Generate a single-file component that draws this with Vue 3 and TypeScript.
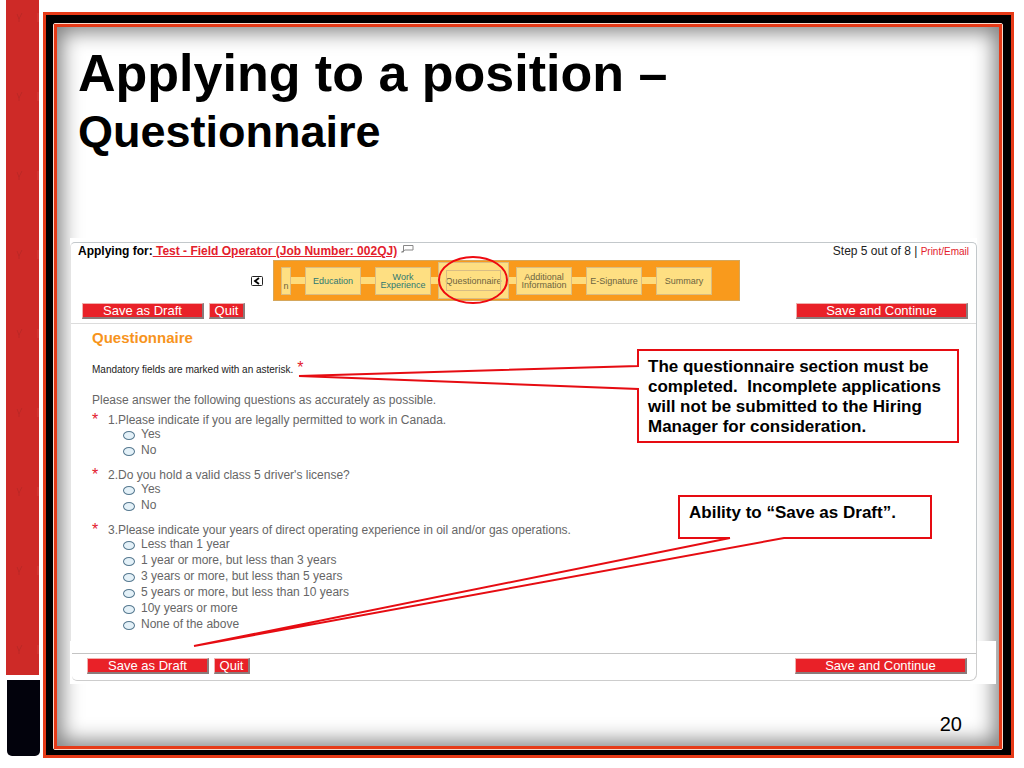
<script setup lang="ts">
import { ref } from 'vue'

interface Step {
  label: string
  kind: 'partial' | 'done' | 'active' | 'todo'
}

interface Question {
  id: string
  text: string
  options: string[]
}

const steps: Step[] = [
  { label: 'n', kind: 'partial' },
  { label: 'Education', kind: 'done' },
  { label: 'Work Experience', kind: 'done' },
  { label: 'Questionnaire', kind: 'active' },
  { label: 'Additional Information', kind: 'todo' },
  { label: 'E-Signature', kind: 'todo' },
  { label: 'Summary', kind: 'todo' },
]

const questions: Question[] = [
  { id: 'q1', text: '1.Please indicate if you are legally permitted to work in Canada.', options: ['Yes', 'No'] },
  { id: 'q2', text: "2.Do you hold a valid class 5 driver's license?", options: ['Yes', 'No'] },
  {
    id: 'q3',
    text: '3.Please indicate your years of direct operating experience in oil and/or gas operations.',
    options: [
      'Less than 1 year',
      '1 year or more, but less than 3 years',
      '3 years or more, but less than 5 years',
      '5 years or more, but less than 10 years',
      '10y years or more',
      'None of the above',
    ],
  },
]

const answers = ref<Record<string, string>>({})
</script>

<template>
  <div class="slide">
    <div class="rail" aria-hidden="true">
      <div class="rail-red">
        <svg width="33" height="100%">
          <defs>
            <pattern id="marks" width="33" height="79" patternUnits="userSpaceOnUse">
              <path d="M11 14l2 5 3-6M13 19v3" fill="none" stroke="#a92322" stroke-width="1" opacity="0.5" />
              <path d="M32 13v9" fill="none" stroke="#e0605a" stroke-width="1" opacity="0.4" />
            </pattern>
          </defs>
          <rect width="33" height="100%" fill="url(#marks)" />
        </svg>
      </div>
      <div class="rail-black"></div>
    </div>

    <div class="frame">
      <div class="frame-line">
        <main class="paper">
          <h1 class="title">Applying to a position –<span class="subtitle">Questionnaire</span></h1>

          <div class="panel">
            <section class="sheet">
              <header class="head">
                <div class="job">
                  <b>Applying for:</b><a class="job-link" href="#">&nbsp;Test - Field Operator (Job Number: 002QJ)</a>
                  <svg class="bubble" width="13" height="8" viewBox="0 0 13 8">
                    <path d="M2.500 0.500h9.500v4.500h-8l-3.500 2h2v-2z" fill="#fff" stroke="#888" />
                  </svg>
                </div>
                <div class="progress">Step 5 out of 8 | <a class="print" href="#">Print/Email</a></div>
              </header>

              <nav class="steps">
                <button class="back" type="button" aria-label="Previous steps">
                  <svg width="12" height="10" viewBox="0 0 12 10">
                    <rect x="0.500" y="0.500" width="11" height="9" rx="1" fill="#fff" stroke="#222" />
                    <path d="M8 2L4 5l4 3" fill="none" stroke="#000" stroke-width="1.800" />
                  </svg>
                </button>
                <ol class="strip">
                  <li v-for="step in steps" :key="step.label" :class="['step', step.kind]">
                    <a class="step-box" href="#">{{ step.label }}</a>
                  </li>
                </ol>
              </nav>

              <div class="actions">
                <button class="btn wide" type="button">Save as Draft</button>
                <button class="btn quit" type="button">Quit</button>
                <button class="btn next" type="button">Save and Continue</button>
              </div>

              <form class="form">
                <h2 class="heading">Questionnaire</h2>
                <p class="mandatory">Mandatory fields are marked with an asterisk.<span class="star">*</span></p>
                <p class="intro">Please answer the following questions as accurately as possible.</p>
                <div
                  v-for="question in questions"
                  :key="question.id"
                  class="question"
                  role="radiogroup"
                  :aria-labelledby="question.id"
                >
                  <div class="prompt">
                    <span class="star">*</span><span :id="question.id">{{ question.text }}</span>
                  </div>
                  <label v-for="option in question.options" :key="option" class="option">
                    <input v-model="answers[question.id]" type="radio" :name="question.id" :value="option" />
                    <span>{{ option }}</span>
                  </label>
                </div>
              </form>
            </section>

            <footer class="foot">
              <div class="foot-box">
                <div class="actions">
                  <button class="btn wide" type="button">Save as Draft</button>
                  <button class="btn quit" type="button">Quit</button>
                  <button class="btn next" type="button">Save and Continue</button>
                </div>
              </div>
            </footer>

            <svg class="shapes" width="906" height="446" viewBox="0 0 906 446" aria-hidden="true">
              <ellipse cx="403" cy="42" rx="34" ry="23" fill="none" stroke="#ee0a10" stroke-width="2" />
              <path
                d="M568 112H888V204H568V151L229 138L568 128Z"
                fill="#fff"
                stroke="#e60c12"
                stroke-width="2"
              />
              <path
                d="M660 300H609V258H861V300H714L124 408L660 300"
                fill="#fff"
                stroke="#e60c12"
                stroke-width="2"
              />
            </svg>
            <p class="note note-top">
              The questionnaire section must be completed.&nbsp; Incomplete applications will not be submitted to the Hiring Manager for consideration.
            </p>
            <p class="note note-draft">Ability to “Save as Draft”.</p>
          </div>

          <div class="page-number">20</div>
        </main>
      </div>
    </div>
  </div>
</template>

<style>
body {
  margin: 0;
  background: #fff;
}
</style>

<style scoped>
* {
  box-sizing: border-box;
}

.slide {
  display: flex;
  min-height: 100vh;
  font-family: 'Liberation Sans', Arial, sans-serif;
  color: #000;
}

.rail {
  display: flex;
  flex-direction: column;
  gap: 5px;
  width: 40px;
  padding: 0 0 12px 6px;
}

.rail-red {
  flex: 1;
  width: 33px;
  background: #ce2a27;
}

.rail-red svg {
  display: block;
}

.rail-black {
  height: 76px;
  margin-left: 1px;
  border-radius: 0 0 5px 5px;
  background: #02020c;
}

.frame {
  display: flex;
  flex: 1;
  min-width: 0;
  margin: 12px 10px 10px 3px;
  padding: 8px 8px 5px 7px;
  border: 3px solid #e63a17;
  background: #000;
}

.frame-line {
  display: flex;
  flex: 1;
  min-width: 0;
  border: 1px solid #fbd9cc;
  border-radius: 2px;
}

.paper {
  flex: 1;
  min-width: 0;
  padding: 16px 22px 0 13px;
  border: 3px solid #e63a17;
  background: #fff;
  box-shadow: inset 0 0 20px 5px rgba(0, 0, 0, 0.5);
}

.title {
  margin: 0 0 77px 8px;
  font-size: 52px;
  font-weight: bold;
  line-height: 60px;
}

.subtitle {
  display: block;
  font-size: 45px;
  line-height: 58px;
}

.panel {
  position: relative;
  padding-top: 4px;
  background: #fff;
}

.sheet {
  border: 1px solid #c3c8cb;
  border-left-color: #e4e4e4;
  border-bottom: 0;
  border-radius: 5px 5px 0 0;
}

.head {
  display: flex;
  justify-content: space-between;
  height: 17px;
  padding: 0 7px;
  font-size: 12px;
  line-height: 16px;
  white-space: nowrap;
}

.job {
  display: flex;
}

.job-link {
  color: #e3202c;
  font-weight: bold;
}

.bubble {
  margin: 2px 0 0 4px;
}

.progress {
  color: #222;
}

.print {
  color: #e3202c;
  font-size: 10px;
  text-decoration: none;
}

.steps {
  display: flex;
  align-items: center;
  padding-left: 180px;
}

.back {
  display: block;
  width: 12px;
  height: 10px;
  margin-right: 10px;
  padding: 0;
  border: 0;
  background: none;
  line-height: 0;
}

.strip {
  display: flex;
  align-items: center;
  width: 467px;
  height: 41px;
  margin: 0;
  padding: 0 0 0 7px;
  border: 1px solid #d5a75c;
  background: #f99a1c;
  list-style: none;
}

.step {
  display: flex;
  align-items: center;
}

.step + .step::before {
  content: '';
  width: 14px;
  height: 7px;
  background: #fedc7c;
}

.step-box {
  display: flex;
  align-items: center;
  justify-content: center;
  width: 56px;
  height: 28px;
  border: 1px solid #d9bd83;
  background: #fedf82;
  color: #6d6440;
  font-size: 9px;
  line-height: 8px;
  text-align: center;
  text-decoration: none;
}

.done .step-box {
  color: #2f7871;
}

.partial .step-box {
  align-items: flex-end;
  width: 10px;
  padding-bottom: 4px;
}

.step.active::before,
.step.active + .step::before {
  width: 7px;
}

.active .step-box {
  width: 71px;
  height: 37px;
  outline: 1px solid #d9bd83;
  outline-offset: -9px;
}

.actions {
  display: flex;
  gap: 5px;
  padding: 2px 8px 4px 11px;
}

.btn {
  height: 16px;
  padding: 0;
  border: 1px solid #f0b0ae;
  border-right: 2px solid #8b7b7b;
  border-bottom: 2px solid #8b7b7b;
  background: #e92128;
  color: #fff;
  font-family: inherit;
  font-size: 13px;
  line-height: 12px;
}

.wide {
  width: 122px;
}

.quit {
  width: 36px;
}

.next {
  width: 172px;
  margin-left: auto;
}

.form {
  padding: 4px 21px 9px;
  border-top: 1px solid #dcdcdc;
  color: #666;
  font-size: 12px;
}

.heading {
  margin: 0 0 14px;
  color: #f7941d;
  font-size: 15px;
  line-height: 20px;
}

.mandatory {
  margin: 0 0 14px;
  color: #222;
  font-size: 10px;
  line-height: 16px;
}

.star {
  color: #e3202c;
  font-size: 16px;
  line-height: 12px;
}

.mandatory .star {
  margin-left: 4px;
}

.intro {
  margin: 0;
  line-height: 16px;
}

.question {
  margin-top: 11px;
}

.intro + .question {
  margin-top: 6px;
}

.prompt {
  display: flex;
  line-height: 12px;
}

.prompt .star {
  width: 16px;
}

.option {
  display: flex;
  align-items: center;
  gap: 6px;
  width: max-content;
  padding-left: 31px;
  line-height: 16px;
}

.option input {
  width: 12px;
  height: 9px;
  margin: 2px 0 0;
  border: 1px solid #55788f;
  border-radius: 50%;
  background: #e4f1f8;
  appearance: none;
}

.option input:checked {
  background: #3c7a3c;
}

.foot {
  margin: 0 -19px 0 2px;
  padding: 0 19px 3px 0;
  background: #fff;
}

.foot-box {
  padding-top: 12px;
  border: 1px solid #cdcdcd;
  border-width: 0 1px 1px 0;
  border-radius: 0 0 7px 5px;
}

.foot .actions {
  padding: 4px 9px 6px 15px;
  border-top: 1px solid #c4c4c4;
}

.shapes {
  position: absolute;
  top: 0;
  left: 0;
  pointer-events: none;
}

.note {
  position: absolute;
  margin: 0;
  font-size: 17px;
  font-weight: bold;
  line-height: 20px;
}

.note-top {
  top: 119px;
  left: 578px;
  width: 304px;
}

.note-draft {
  top: 265px;
  left: 619px;
  white-space: nowrap;
}

.page-number {
  margin: 29px 15px 0 0;
  font-size: 20px;
  line-height: 23px;
  text-align: right;
}
</style>
